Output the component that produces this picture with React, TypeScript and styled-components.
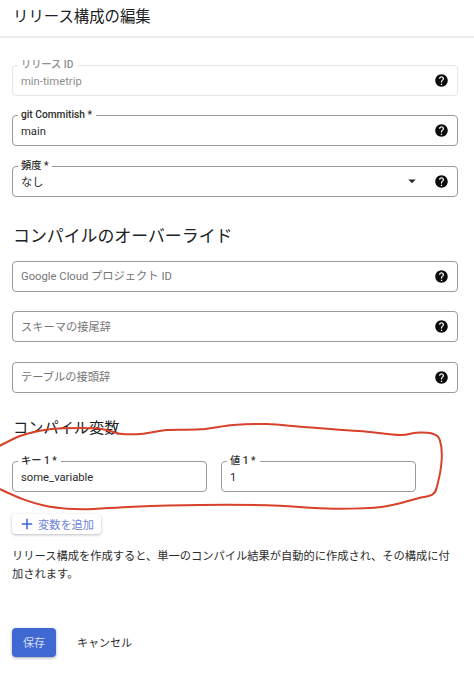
import styled, { createGlobalStyle } from 'styled-components';
import { MdAdd, MdArrowDropDown, MdHelp } from 'react-icons/md';

const GlobalStyle = createGlobalStyle`
  html, body {
    margin: 0;
    padding: 0;
    background: #fff;
    overflow: hidden;
  }
  body {
    font-family: Roboto, "Noto Sans CJK JP", sans-serif;
    color: #202124;
  }
`;

const Page = styled.div`
  position: relative;
  width: 474px;
  height: 673px;
  overflow: hidden;
`;

const Header = styled.header`
  height: 38px;
  box-sizing: border-box;
  padding: 7px 13px 0;
  border-bottom: 2px solid #ececec;
`;

const Title = styled.h1`
  margin: 0;
  font-size: 15.4px;
  line-height: 20px;
  font-weight: 400;
`;

const Form = styled.form`
  display: flex;
  flex-direction: column;
  padding: 27px 16px 0 12px;
`;

const FieldStack = styled.div`
  display: flex;
  flex-direction: column;
  gap: 19.4px;
`;

const SectionTitle = styled.h2<{ $top: number; $bottom: number; $size: number }>`
  margin: ${(p) => p.$top}px 0 ${(p) => p.$bottom}px 1px;
  font-size: ${(p) => p.$size}px;
  line-height: 20px;
  font-weight: 400;
`;

const Field = styled.div<{ $disabled?: boolean }>`
  position: relative;
  height: 31px;
  box-sizing: border-box;
  display: flex;
  align-items: center;
  gap: 12px;
  padding: 0 8px;
  border: 1px solid ${(p) => (p.$disabled ? '#e6e6e6' : '#9a9a9a')};
  border-radius: 4px;
`;

const FloatingLabel = styled.label<{ $disabled?: boolean }>`
  position: absolute;
  top: -7px;
  left: 5px;
  padding: 0 4px 0 3px;
  background: #fff;
  font-size: 10.2px;
  line-height: 12px;
  font-weight: 500;
  white-space: nowrap;
  color: ${(p) => (p.$disabled ? '#8f8f8f' : '#2c2c2c')};
`;

const Value = styled.span<{ $tone?: 'muted' | 'placeholder' }>`
  flex: 1;
  font-size: 11.25px;
  line-height: 14px;
  padding-top: ${(p) => (p.$tone === 'placeholder' ? 2 : 3)}px;
  color: ${(p) => (p.$tone === 'muted' ? '#8e8e8e' : p.$tone === 'placeholder' ? '#767676' : '#2c2c2c')};
`;

const HelpIcon = styled(MdHelp)`
  flex: none;
  width: 15px;
  height: 15px;
  color: #0c0c0c;
`;

const DropIcon = styled(MdArrowDropDown)`
  flex: none;
  width: 18px;
  height: 18px;
  margin-right: 1px;
  color: #2c2c2c;
`;

const VariableRow = styled.div`
  display: grid;
  grid-template-columns: 1fr 1fr;
  gap: 14px;
  width: 404px;
`;

const AddButton = styled.button`
  align-self: flex-start;
  display: flex;
  align-items: center;
  gap: 2px;
  width: 89px;
  height: 20px;
  box-sizing: border-box;
  margin-top: 22px;
  padding: 0 0 0 6px;
  border: none;
  border-radius: 4px;
  background: #fff;
  box-shadow: 0 1px 3px rgba(60, 64, 67, 0.35);
  color: #6f84d6;
  font: 400 11.2px Roboto, "Noto Sans CJK JP", sans-serif;

  svg {
    width: 18px;
    height: 18px;
    color: #3b66d1;
  }
`;

const Note = styled.p`
  margin: 14px 0 0;
  width: 446px;
  font-size: 11.25px;
  line-height: 18px;
  color: #2c2c2c;
`;

const Actions = styled.div`
  display: flex;
  align-items: center;
  gap: 21px;
  margin-top: 44px;
`;

const SaveButton = styled.button`
  width: 44px;
  height: 29px;
  border: none;
  border-radius: 4px;
  background: #3f68d2;
  box-shadow: 0 1px 3px rgba(60, 64, 67, 0.45);
  color: #d5def7;
  font: 400 11px Roboto, "Noto Sans CJK JP", sans-serif;
`;

const CancelButton = styled.button`
  padding: 0;
  border: none;
  background: none;
  color: #2c2c2c;
  font: 400 11px Roboto, "Noto Sans CJK JP", sans-serif;
`;

const Scribble = styled.svg`
  position: absolute;
  left: 0;
  top: 410px;
  width: 474px;
  height: 130px;
  pointer-events: none;
`;

// hand-drawn circle, traced in 3x coordinates
const scribblePoints = [
  [-10, 112], [60, 78], [120, 62], [190, 55], [300, 56], [360, 71], [430, 71], [500, 60],
  [600, 58], [700, 45], [800, 42], [900, 50], [1000, 58], [1100, 65], [1200, 75], [1250, 68],
  [1300, 72], [1320, 92], [1325, 150], [1312, 225], [1298, 253], [1250, 266], [1150, 290],
  [1000, 296], [800, 286], [600, 285], [400, 290], [250, 298], [150, 290], [70, 268], [-10, 233],
];

const scribblePath = scribblePoints.reduce((d, p, i, pts) => {
  if (i === 0) return `M${p[0]} ${p[1]}`;
  const a = pts[Math.max(i - 2, 0)];
  const b = pts[i - 1];
  const c = pts[Math.min(i + 1, pts.length - 1)];
  const c1 = [b[0] + (p[0] - a[0]) / 6, b[1] + (p[1] - a[1]) / 6];
  const c2 = [p[0] - (c[0] - b[0]) / 6, p[1] - (c[1] - b[1]) / 6];
  return `${d} C${c1[0]} ${c1[1]} ${c2[0]} ${c2[1]} ${p[0]} ${p[1]}`;
}, '');

const App = () => {
  return (
    <Page>
      <GlobalStyle />
      <Header>
        <Title>リリース構成の編集</Title>
      </Header>
      <Form>
        <FieldStack>
          <Field $disabled>
            <FloatingLabel $disabled>リリース ID</FloatingLabel>
            <Value $tone="muted">min-timetrip</Value>
            <HelpIcon />
          </Field>
          <Field>
            <FloatingLabel>git Commitish *</FloatingLabel>
            <Value>main</Value>
            <HelpIcon />
          </Field>
          <Field>
            <FloatingLabel>頻度 *</FloatingLabel>
            <Value>なし</Value>
            <DropIcon />
            <HelpIcon />
          </Field>
        </FieldStack>

        <SectionTitle $top={29.2} $bottom={15} $size={16.9}>コンパイルのオーバーライド</SectionTitle>
        <FieldStack>
          <Field>
            <Value $tone="placeholder">Google Cloud プロジェクト ID</Value>
            <HelpIcon />
          </Field>
          <Field>
            <Value $tone="placeholder">スキーマの接尾辞</Value>
            <HelpIcon />
          </Field>
          <Field>
            <Value $tone="placeholder">テーブルの接頭辞</Value>
            <HelpIcon />
          </Field>
        </FieldStack>

        <SectionTitle $top={25.2} $bottom={23} $size={15.2}>コンパイル変数</SectionTitle>
        <VariableRow>
          <Field>
            <FloatingLabel>キー 1 *</FloatingLabel>
            <Value>some_variable</Value>
          </Field>
          <Field>
            <FloatingLabel>値 1 *</FloatingLabel>
            <Value>1</Value>
          </Field>
        </VariableRow>

        <AddButton type="button">
          <MdAdd />
          変数を追加
        </AddButton>

        <Note>リリース構成を作成すると、単一のコンパイル結果が自動的に作成され、その構成に付加されます。</Note>

        <Actions>
          <SaveButton type="button">保存</SaveButton>
          <CancelButton type="button">キャンセル</CancelButton>
        </Actions>
      </Form>
      <Scribble viewBox="0 0 1422 390">
        <path d={scribblePath} fill="none" stroke="#d8412a" strokeWidth="6" strokeLinecap="round" />
      </Scribble>
    </Page>
  );
};

export default App;
